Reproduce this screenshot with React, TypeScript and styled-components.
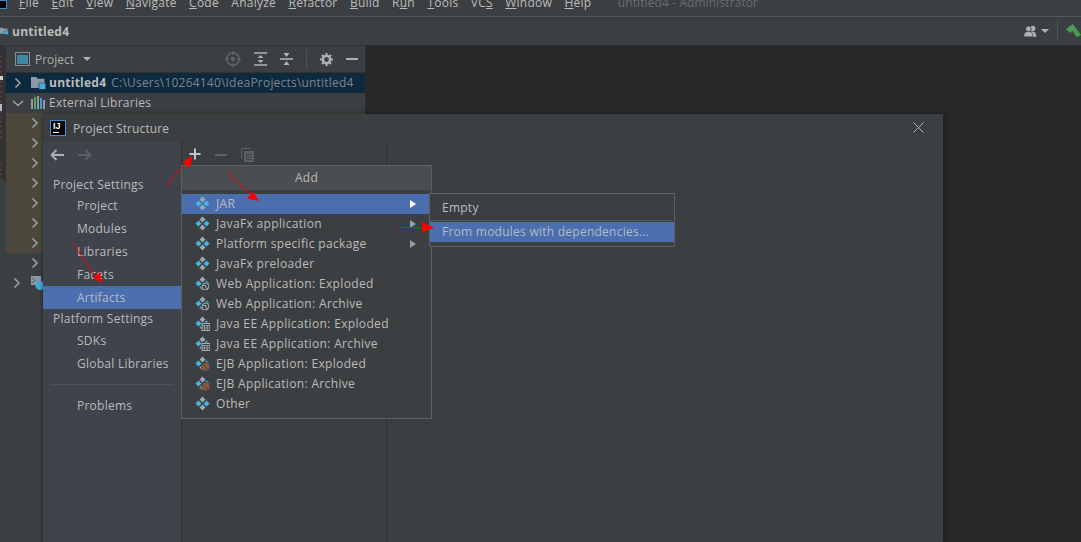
import styled, { createGlobalStyle } from "styled-components";

const GlobalStyle = createGlobalStyle`
  html, body {
    margin: 0;
    padding: 0;
    background: #282828;
  }
  body {
    font-family: "Open Sans", "Liberation Sans", sans-serif;
    font-size: 12px;
    letter-spacing: 0.25px;
    color: #bbbbbb;
  }
`;

const menus: [string, string, string][] = [
  ["", "F", "ile"],
  ["", "E", "dit"],
  ["", "V", "iew"],
  ["", "N", "avigate"],
  ["", "C", "ode"],
  ["", "", "Analyze"],
  ["", "R", "efactor"],
  ["", "B", "uild"],
  ["R", "u", "n"],
  ["", "T", "ools"],
  ["VC", "S", ""],
  ["", "W", "indow"],
  ["", "H", "elp"],
];

const addItems: { label: string; badge?: "web" | "ee" | "ejb"; sub?: boolean }[] = [
  { label: "JavaFx application", sub: true },
  { label: "Platform specific package", sub: true },
  { label: "JavaFx preloader" },
  { label: "Web Application: Exploded", badge: "web" },
  { label: "Web Application: Archive", badge: "web" },
  { label: "Java EE Application: Exploded", badge: "ee" },
  { label: "Java EE Application: Archive", badge: "ee" },
  { label: "EJB Application: Exploded", badge: "ejb" },
  { label: "EJB Application: Archive", badge: "ejb" },
  { label: "Other" },
];

const Chevron = () => (
  <svg width="8" height="12" viewBox="0 0 8 12">
    <path d="M1.5 1.5 6 6l-4.5 4.5" fill="none" stroke="#a0a3a6" strokeWidth="1.5" />
  </svg>
);

const ModuleIcon = () => (
  <svg width="16" height="14" viewBox="0 0 19 16">
    <path d="M0 1h6l2 2h8v11H0z" fill="#8c9aa6" />
    <rect x="9.5" y="8" width="8" height="7.5" fill="#3fb0e4" stroke="#1f2a30" strokeWidth=".6" />
  </svg>
);

const ArtifactIcon = ({ badge }: { badge?: "web" | "ee" | "ejb" }) => (
  <svg width="15" height="15" viewBox="0 0 15 15">
    <path d="M7.5 .5 10.5 3.5 7.5 6.5 4.5 3.5z" fill="#9aa7b0" />
    <path d="M3.5 4.5 6.5 7.5 3.5 10.5 .5 7.5z" fill="#40b6e0" />
    <path d="M11.5 4.5 14.5 7.5 11.5 10.5 8.5 7.5z" fill="#40b6e0" />
    <path d="M7.5 8.5 10.5 11.5 7.5 14.5 4.5 11.5z" fill="#9aa7b0" />
    {badge === "web" && (
      <g>
        <circle cx="10.5" cy="10.5" r="4.4" fill="#3c3f41" />
        <circle cx="10.5" cy="10.5" r="3.4" fill="none" stroke="#a4afb8" strokeWidth="1" />
        <path d="M8 9.5h3V12l2 .5" fill="none" stroke="#a4afb8" strokeWidth="1" />
      </g>
    )}
    {badge === "ee" && (
      <g>
        <rect x="6" y="6.5" width="9" height="8.5" fill="#3c3f41" />
        <rect x="7" y="7.5" width="8" height="7" fill="none" stroke="#a4afb8" strokeWidth="1" />
        <path d="M7 9.5h8M9.5 9.5v5M12.2 9.5v5M7 12h8" stroke="#a4afb8" strokeWidth=".8" />
      </g>
    )}
    {badge === "ejb" && (
      <g>
        <circle cx="10.7" cy="10.7" r="4.6" fill="#3c3f41" />
        <circle cx="10.7" cy="10.7" r="3.8" fill="#8a5a3c" />
        <path d="M8 8.5 13 13" stroke="#5b3c28" strokeWidth="1" />
      </g>
    )}
  </svg>
);

const PageArrow = ({ d, head }: { d: string; head: string }) => (
  <g>
    <path d={d} stroke="#ff0000" strokeWidth="1" fill="none" />
    <polygon points={head} fill="#ff0000" />
  </g>
);

const App = () => {
  return (
    <Page>
      <GlobalStyle />
      <MenuBar>
        <AppBadge />
        <MenuList>
          {menus.map(([a, u, b]) => (
            <MenuItem key={a + u + b}>
              {a}
              <u>{u}</u>
              {b}
            </MenuItem>
          ))}
          <WindowTitle>untitled4 - Administrator</WindowTitle>
        </MenuList>
      </MenuBar>

      <NavBar>
        <NavCrumb>
          <NavIcon>
            <ModuleIcon />
          </NavIcon>
          <b>untitled4</b>
        </NavCrumb>
        <NavTools>
          <svg width="14" height="13" viewBox="0 0 16 14">
            <circle cx="10" cy="3.5" r="3" fill="#afb1b3" />
            <path d="M9 7c3 0 5 1.5 5 5v1H6v-1c0-3.5 1-5 3-5z" fill="#afb1b3" />
            <circle cx="5" cy="4" r="3.2" fill="#afb1b3" stroke="#3c3f41" />
            <path d="M0 13v-2c0-2.5 2-4 5-4s5 1.5 5 4v2z" fill="#afb1b3" stroke="#3c3f41" strokeWidth=".7" />
          </svg>
          <Caret />
          <NavSep />
          <svg width="15" height="16" viewBox="0 0 15 16">
            <path d="M0 6 6.7 1 15 12l-4.3 2.3L6.3 7.7 4 10z" fill="#499c54" />
          </svg>
        </NavTools>
      </NavBar>

      <Workspace>
        <ProjectPanel>
          <ToolHeader>
            <svg width="15" height="14" viewBox="0 0 15 14">
              <rect x=".5" y=".5" width="14" height="13" fill="none" stroke="#8a8d90" />
              <rect x="2" y="3" width="11" height="9" fill="#3d87a8" />
            </svg>
            <ToolTitle>Project</ToolTitle>
            <Caret />
            <ToolActions>
              <svg width="16" height="16" viewBox="0 0 16 16">
                <circle cx="8" cy="8" r="6.2" fill="none" stroke="#5f6366" strokeWidth="1.6" />
                <circle cx="8" cy="8" r="2.2" fill="#5f6366" />
                <path d="M8 0v4M8 12v4M0 8h4M12 8h4" stroke="#5f6366" strokeWidth="1.5" />
              </svg>
              <svg width="13" height="14" viewBox="0 0 13 14">
                <path d="M0 1h13M0 13h13" stroke="#afb1b3" strokeWidth="1.6" />
                <path d="M6.5 3 9.5 6h-6zM6.5 11 9.5 8h-6z" fill="#afb1b3" />
              </svg>
              <svg width="13" height="14" viewBox="0 0 13 14">
                <path d="M0 7h13" stroke="#afb1b3" strokeWidth="1.6" />
                <path d="M6.5 5 9.5 1h-6zM6.5 9 9.5 13h-6z" fill="#afb1b3" />
              </svg>
              <ToolSep />
              <svg width="13" height="13" viewBox="0 0 13 13">
                <circle cx="6.5" cy="6.5" r="3.6" fill="none" stroke="#afb1b3" strokeWidth="2.4" />
                <path d="M6.5 0v3M6.5 10v3M0 6.5h3M10 6.5h3M2 2l2 2M9 9l2 2M11 2 9 4M4 9l-2 2" stroke="#afb1b3" strokeWidth="2" />
              </svg>
              <svg width="12" height="2" viewBox="0 0 12 2">
                <rect width="12" height="2" fill="#afb1b3" />
              </svg>
            </ToolActions>
          </ToolHeader>

          <TreeRow $selected>
            <Chevron />
            <TreeIcon>
              <ModuleIcon />
            </TreeIcon>
            <b>untitled4</b>
            <TreePath>C:\Users\10264140\IdeaProjects\untitled4</TreePath>
          </TreeRow>
          <TreeRow>
            <svg width="8" height="12" viewBox="0 0 8 12" style={{ overflow: "visible" }}>
              <path d="M-1 4 4 8.5 9 4" fill="none" stroke="#a0a3a6" strokeWidth="1.5" />
            </svg>
            <TreeIcon>
              <svg width="14" height="13" viewBox="0 0 14 13">
                <rect x="0" y="3" width="2" height="10" fill="#8c9aa6" />
                <rect x="3" y="1" width="2" height="12" fill="#62a558" />
                <rect x="6" y="0" width="2" height="13" fill="#8c9aa6" />
                <rect x="9" y="2" width="2" height="11" fill="#3f9fd0" />
                <rect x="12" y="4" width="2" height="9" fill="#8c9aa6" />
              </svg>
            </TreeIcon>
            External Libraries
          </TreeRow>
          <LibraryBlock>
            {Array.from({ length: 7 }, (_, i) => (
              <LibraryRow key={i}>
                <Chevron />
              </LibraryRow>
            ))}
          </LibraryBlock>
          <LibraryRow>
            <Chevron />
          </LibraryRow>
          <ScratchRow>
            <Chevron />
            <svg width="13" height="15" viewBox="0 0 13 15">
              <rect x="0" y="0" width="10" height="9" fill="#8c9aa6" />
              <path d="M1.5 2 4 4.5 1.5 7" fill="none" stroke="#3c3f41" strokeWidth="1" />
              <circle cx="9" cy="9.5" r="4.5" fill="#3fa9d4" />
            </svg>
          </ScratchRow>
        </ProjectPanel>
        <Editor />
      </Workspace>

      <LeftStrip>
        <svg width="5" height="134" viewBox="0 0 5 134">
          <path d="M.8 10v85M.8 118v16" stroke="#a04040" strokeWidth="1" strokeDasharray="1.5 3.5" />
          <rect x="0" y="30" width="3" height="4" fill="#d0d0d0" />
          <rect x="0" y="58" width="2" height="7" fill="#b8b8b8" />
        </svg>
      </LeftStrip>

      <Dialog>
        <DialogTitle>
          <IjLogo>IJ</IjLogo>
          <DialogName>Project Structure</DialogName>
          <CloseButton>
            <svg width="11" height="11" viewBox="0 0 11 11">
              <path d="M.5 .5l10 10M10.5 .5l-10 10" stroke="#afb1b3" strokeWidth="1" />
            </svg>
          </CloseButton>
        </DialogTitle>
        <DialogBody>
          <Sidebar>
            <SideNav>
              <svg width="15" height="12" viewBox="0 0 15 12">
                <path d="M14 6H2M6.5 1 1.5 6l5 5" fill="none" stroke="#afb1b3" strokeWidth="1.8" />
              </svg>
              <svg width="15" height="12" viewBox="0 0 15 12">
                <path d="M1 6h12M8.5 1l5 5-5 5" fill="none" stroke="#5c6063" strokeWidth="1.8" />
              </svg>
            </SideNav>
            <SideHeading>Project Settings</SideHeading>
            <SideItem>Project</SideItem>
            <SideItem>Modules</SideItem>
            <SideItem>Libraries</SideItem>
            <SideItem>Facets</SideItem>
            <SideItem $active>Artifacts</SideItem>
            <SideHeading>Platform Settings</SideHeading>
            <SideItem>SDKs</SideItem>
            <SideItem>Global Libraries</SideItem>
            <SideDivider />
            <SideItem>Problems</SideItem>
          </Sidebar>
          <ArtifactPane>
            <svg width="12" height="12" viewBox="0 0 12 12">
              <path d="M6 .5v11M.5 6h11" stroke="#c4c6c8" strokeWidth="2" />
            </svg>
            <svg width="12" height="2" viewBox="0 0 12 2">
              <rect width="12" height="2" fill="#5c6063" />
            </svg>
            <svg width="13" height="14" viewBox="0 0 13 14">
              <path d="M.5 11V.5H9" fill="none" stroke="#5c6063" />
              <rect x="3" y="3" width="10" height="11" fill="#5c6063" />
              <path d="M5 6.5h6M5 9h6M5 11.5h6" stroke="#3c3f41" />
            </svg>
          </ArtifactPane>
        </DialogBody>
      </Dialog>

      <AddPopup>
        <PopupHeader>Add</PopupHeader>
        <PopupList>
          <PopupRow $active>
            <ArtifactIcon />
            JAR
            <SubArrow $active />
          </PopupRow>
          {addItems.map((item) => (
            <PopupRow key={item.label}>
              <ArtifactIcon badge={item.badge} />
              {item.label}
              {item.sub && <SubArrow />}
            </PopupRow>
          ))}
        </PopupList>
      </AddPopup>

      <SubPopup>
        <SubRow>Empty</SubRow>
        <SubDivider />
        <SubRow $active>From modules with dependencies...</SubRow>
      </SubPopup>

      <Annotations width="1081" height="542" viewBox="0 0 1081 542">
        <PageArrow d="M165.5 186 188 160" head="192.5,155.5 190,168 183,162" />
        <PageArrow d="M227.5 173 253 196" head="259,201 247,198.5 253,191.5" />
        <PageArrow d="M72.5 243 96 277" head="101.5,283 93,278 100,272" />
        <PageArrow d="M399 227.5H425" head="434,227.5 422,222 422,233" />
      </Annotations>
    </Page>
  );
};
export default App;

const Page = styled.div`
  position: relative;
  width: 1081px;
  height: 542px;
  overflow: hidden;
  display: flex;
  flex-direction: column;
  background: #3c3f41;
`;
const MenuBar = styled.div`
  height: 16px;
  flex: none;
  display: flex;
  align-items: flex-start;
  overflow: hidden;
  background: #3c3f41;
  border-bottom: 1px solid #55585a;
`;
const AppBadge = styled.div`
  width: 6px;
  height: 7px;
  flex: none;
  background: #000;
  border: 1px solid #3d8bd4;
  border-left: none;
`;
const MenuList = styled.div`
  display: flex;
  gap: 12.4px;
  margin-left: 12px;
  margin-top: -5px;
  line-height: 16px;
`;
const MenuItem = styled.span`
  white-space: nowrap;
`;
const WindowTitle = styled.span`
  margin-left: 14px;
  color: #6a6d70;
  letter-spacing: 0.1px;
  white-space: nowrap;
`;
const NavBar = styled.div`
  height: 28px;
  flex: none;
  display: flex;
  align-items: center;
  justify-content: space-between;
  background: #3c3f41;
  border-bottom: 1px solid #323232;
`;
const NavCrumb = styled.div`
  display: flex;
  align-items: center;
  gap: 3px;
  font-size: 12px;
`;
const NavIcon = styled.span`
  display: flex;
  width: 9px;
  overflow: hidden;
  justify-content: flex-end;
`;
const NavTools = styled.div`
  display: flex;
  align-items: center;
  width: 57px;
  flex: none;
  overflow: hidden;
  height: 22px;
`;
const Caret = styled.span`
  width: 0;
  height: 0;
  flex: none;
  margin-left: 3px;
  border-left: 4px solid transparent;
  border-right: 4px solid transparent;
  border-top: 4px solid #afb1b3;
`;
const NavSep = styled.span`
  width: 1px;
  height: 20px;
  flex: none;
  margin: 0 8px 0 8px;
  background: #515456;
`;
const Workspace = styled.div`
  flex: 1;
  display: flex;
  min-height: 0;
`;
const ProjectPanel = styled.div`
  width: 359px;
  flex: none;
  margin-left: 6px;
  background: #3c3f41;
  border-right: 1px solid #2b2b2b;
`;
const ToolHeader = styled.div`
  height: 26px;
  display: flex;
  align-items: center;
  padding: 0 7px 0 9px;
  border-bottom: 1px solid #323232;
`;
const ToolTitle = styled.span`
  margin: 0 6px 0 5px;
  color: #a9acaf;
  font-size: 12px;
  letter-spacing: 0;
`;
const ToolActions = styled.div`
  margin-left: auto;
  display: flex;
  align-items: center;
  gap: 13px;
`;
const ToolSep = styled.span`
  width: 1px;
  height: 20px;
  background: #515456;
`;
const TreeRow = styled.div<{ $selected?: boolean }>`
  height: 20px;
  box-sizing: border-box;
  padding: 0 0 1px 8px;
  display: flex;
  align-items: center;
  gap: 2px;
  white-space: nowrap;
  background: ${({ $selected }) => ($selected ? "#0d293e" : "transparent")};
`;
const TreeIcon = styled.span`
  display: flex;
  width: 16px;
  margin-left: 7px;
`;
const TreePath = styled.span`
  margin-left: 3px;
  letter-spacing: 0.2px;
  color: #7d858c;
`;
const LibraryBlock = styled.div`
  background: #4b473a;
`;
const LibraryRow = styled.div`
  height: 20px;
  display: flex;
  align-items: center;
  padding-left: 25px;
`;
const ScratchRow = styled(LibraryRow)`
  padding-left: 7px;
  gap: 10px;
`;
const Editor = styled.div`
  flex: 1;
  background: #282828;
`;
const LeftStrip = styled.div`
  position: absolute;
  left: 0;
  top: 46px;
  width: 5px;
  height: 134px;
  overflow: hidden;
  background: #303234;
  border-right: 1px solid #2f3133;
`;
const Dialog = styled.div`
  position: absolute;
  left: 43px;
  top: 114px;
  width: 900px;
  height: 428px;
  display: flex;
  flex-direction: column;
  background: #3c3f41;
  box-shadow: 0 0 4px rgba(0, 0, 0, 0.5);
`;
const DialogTitle = styled.div`
  position: relative;
  height: 28px;
  flex: none;
  display: flex;
  align-items: center;
  gap: 7px;
  padding-left: 7px;
`;
const DialogName = styled.span`
  letter-spacing: 0.1px;
`;
const IjLogo = styled.div`
  position: relative;
  box-sizing: border-box;
  width: 16px;
  height: 16px;
  padding: 1px 0 0 2px;
  background: #000;
  border: 1px solid #3d8bd4;
  color: #fff;
  font: 700 9px/8px "Liberation Sans", sans-serif;
  letter-spacing: 0;

  &::after {
    content: "";
    position: absolute;
    left: 2px;
    bottom: 2px;
    width: 6px;
    height: 1px;
    background: #fff;
  }
`;
const CloseButton = styled.span`
  position: absolute;
  right: 19px;
  top: 8px;
  display: flex;
`;
const DialogBody = styled.div`
  flex: 1;
  display: flex;
  min-height: 0;
`;
const Sidebar = styled.div`
  width: 138px;
  flex: none;
  background: #3e434c;
  border-right: 1px solid #323232;
`;
const SideNav = styled.div`
  height: 33px;
  box-sizing: border-box;
  display: flex;
  align-items: flex-start;
  gap: 12px;
  padding: 7px 0 0 7px;
`;
const SideHeading = styled.div`
  height: 20px;
  line-height: 20px;
  padding-left: 10px;

  ${SideNav} + & {
    height: 19px;
  }
`;
const SideItem = styled.div<{ $active?: boolean }>`
  height: 23px;
  line-height: 23px;
  padding-left: 34px;
  color: ${({ $active }) => ($active ? "#b4bac6" : "#bbbbbb")};
  background: ${({ $active }) => ($active ? "#4b6eaf" : "transparent")};
`;
const SideDivider = styled.div`
  height: 1px;
  margin: 9px 8px;
  background: #4c5058;
`;
const ArtifactPane = styled.div`
  width: 205px;
  flex: none;
  height: 100%;
  box-sizing: border-box;
  display: flex;
  align-items: flex-start;
  gap: 14px;
  padding: 6px 0 0 7px;
  border-right: 1px solid #323232;

  & > svg:nth-child(2) {
    margin-top: 6px;
  }
`;
const AddPopup = styled.div`
  position: absolute;
  left: 181px;
  top: 165px;
  width: 249px;
  height: 252px;
  background: #3c3f41;
  border: 1px solid #5e6060;
`;
const PopupHeader = styled.div`
  height: 24px;
  line-height: 24px;
  text-align: center;
  background: #4b4e51;
  font-size: 12px;
`;
const PopupList = styled.div`
  margin-top: 4px;
`;
const PopupRow = styled.div<{ $active?: boolean }>`
  position: relative;
  height: 20px;
  box-sizing: border-box;
  padding: 0 0 1px 13px;
  display: flex;
  align-items: center;
  gap: 6px;
  letter-spacing: 0.34px;
  white-space: nowrap;
  background: ${({ $active }) => ($active ? "#4b6eaf" : "transparent")};
`;
const SubArrow = styled.span<{ $active?: boolean }>`
  position: absolute;
  left: 228px;
  top: 6px;
  width: 0;
  height: 0;
  border-top: 4px solid transparent;
  border-bottom: 4px solid transparent;
  border-left: 6px solid ${({ $active }) => ($active ? "#ffffff" : "#9a9da0")};
`;
const SubPopup = styled.div`
  position: absolute;
  left: 429px;
  top: 193px;
  width: 244px;
  height: 48px;
  padding-top: 4px;
  background: #3c3f41;
  border: 1px solid #5e6060;
`;
const SubRow = styled.div<{ $active?: boolean }>`
  height: 20px;
  line-height: 20px;
  padding-left: 12px;
  color: ${({ $active }) => ($active ? "#b4bac6" : "#bbbbbb")};
  background: ${({ $active }) => ($active ? "#4b6eaf" : "transparent")};
`;
const SubDivider = styled.div`
  height: 1px;
  margin: 2px 3px 1px 0;
  background: #55585a;
`;
const Annotations = styled.svg`
  position: absolute;
  left: 0;
  top: 0;
  pointer-events: none;
`;
